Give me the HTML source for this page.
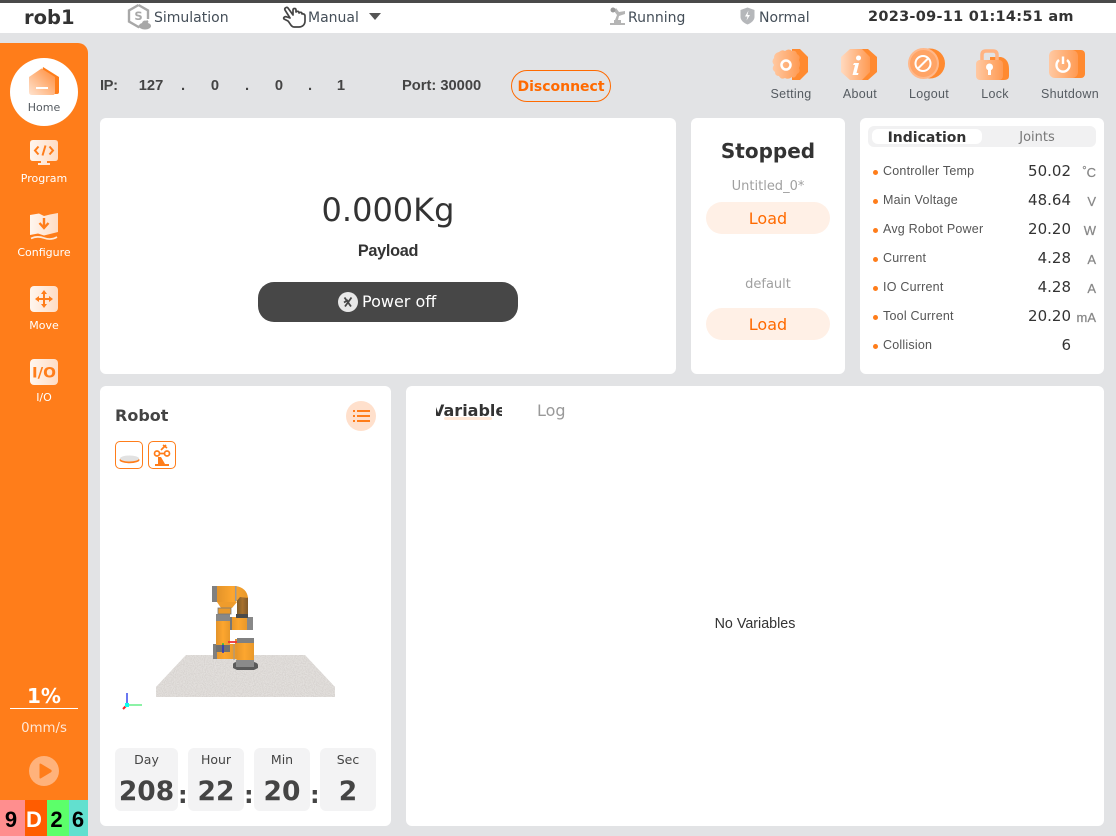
<!DOCTYPE html>
<html><head><meta charset="utf-8"><title>rob1</title>
<style>
*{box-sizing:border-box;margin:0;padding:0}
html,body{width:1116px;height:836px;overflow:hidden;background:#e2e3e5}
body{position:relative;font-family:"DejaVu Sans",sans-serif;color:#333}
.a{position:absolute;white-space:nowrap}
.c{position:absolute;white-space:nowrap;text-align:center}
.card{position:absolute;background:#fff;border-radius:6px}
.lib{font-family:"Liberation Sans",sans-serif}
.nav{position:absolute;left:0;width:88px;text-align:center;color:#fff;font-size:11px}
.tb{font-size:12.5px;color:#555b61;font-family:"Liberation Sans",sans-serif;letter-spacing:.3px}
.r{position:absolute;left:0;width:244px;height:20px}
.dot{position:absolute;left:13px;top:8px;width:5px;height:5px;border-radius:50%;background:#ff7d1a}
.lb{position:absolute;left:23px;top:2px;font:12.5px "Liberation Sans",sans-serif;color:#555;letter-spacing:.22px;white-space:nowrap}
.v{position:absolute;right:33px;top:0;font-size:15px;color:#333;white-space:nowrap}
.u{position:absolute;right:8px;top:3px;font:13px "Liberation Sans",sans-serif;color:#888;white-space:nowrap;-webkit-text-stroke:.25px #888}
.u span{position:relative;top:-3px;font-size:11px}
.load{position:absolute;left:706px;width:124px;height:32px;border-radius:16px;background:#fff0e6;color:#ff6a00;font-size:16px;text-align:center;line-height:33px}
.tm{position:absolute;top:748px;height:63px;background:#f3f3f4;border-radius:6px;text-align:center;color:#444}
.tm i{display:block;font:12.5px/24px "DejaVu Sans",sans-serif;color:#444}
.tm b{display:block;font-size:26.5px;line-height:36px;margin-top:2px;color:#444}
.col{position:absolute;top:781px;font-size:24px;font-weight:bold;color:#444}
.sq{position:absolute;top:800px;height:36px;text-align:center;font:bold 22px/40px "Liberation Sans",sans-serif}
.ip{position:absolute;top:78px;font:bold 14.7px "Liberation Sans",sans-serif;color:#444;white-space:nowrap;text-align:center}
.st{position:absolute;white-space:nowrap;top:9px;font-size:14px;color:#444e58;line-height:18px}
</style></head><body>
<div class="a" style="left:0;top:0;width:1116px;height:33px;background:#fff"></div>
<div class="a" style="left:0;top:0;width:1116px;height:3px;background:#4a4a4a"></div>
<div class="a" style="left:24px;top:7px;font-size:19.5px;font-weight:bold;color:#333;line-height:22px">rob1</div>
<svg class="a" style="left:126px;top:3px" width="26" height="27" viewBox="0 0 26 27"><path d="M12.5 2L22 7.5V16M22 18L12.5 24L3 18.5V7.5L12.5 2" fill="none" stroke="#a8a8a8" stroke-width="2.400"/><text x="12.5" y="17" font-size="11.5" font-weight="bold" fill="#a8a8a8" text-anchor="middle" font-family="DejaVu Sans">S</text><ellipse cx="19" cy="23" rx="6" ry="3.5" fill="#a8a8a8"/><circle cx="19" cy="20.5" r="3" fill="#a8a8a8"/></svg>
<div class="st" style="left:154px">Simulation</div>
<svg class="a" style="left:282px;top:5px" width="24" height="24" viewBox="0 0 24 24"><path d="M6 3l5 7V5c0-2 3-2 3 0v2c1-1 3-1 3 1 1-1 3-1 3 1 1-.5 3 0 3 2v5c0 4-3 6-6 6h-5c-3 0-4-4-6-6l-4-2c-1-1.5 1-3 3-2l3 1L3 5C2 3 5 1.5 6 3z" fill="none" stroke="#444" stroke-width="1.700" stroke-linejoin="round"/></svg>
<div class="st" style="left:308px">Manual</div>
<div class="a" style="left:369px;top:13px;width:0;height:0;border-left:6px solid transparent;border-right:6px solid transparent;border-top:7px solid #555"></div>
<svg class="a" style="left:609px;top:7px" width="17" height="18" viewBox="0 0 17 18"><path d="M1 16h15v2H1zM5 13h7v3H5zM6 13L8 8l-3-4 2-3 3 4 6-1v3l-6 2-1 4z" fill="#b5b5b5"/><circle cx="4" cy="3" r="2.5" fill="#9a9a9a"/></svg>
<div class="st" style="left:628px">Running</div>
<svg class="a" style="left:740px;top:7px" width="15" height="18" viewBox="0 0 15 18"><path d="M7.5 .5L14.5 3V10c0 3-3 6-7 7.5C3.5 16 .5 13 .5 10V3z" fill="#b5b7ba"/><path d="M8.5 3.5L5 9.5h2.5L6.5 13.5 10 8H7.5z" fill="#fff"/></svg>
<div class="st" style="left:759px">Normal</div>
<div class="a" style="left:868px;top:8px;font-size:14.5px;font-weight:bold;color:#333;line-height:18px;letter-spacing:.27px">2023-09-11 01:14:51 am</div>

<div class="a" style="left:0;top:43px;width:88px;height:757px;background:#ff7d1a;border-radius:0 10px 0 0"></div>
<div class="a" style="left:10px;top:58px;width:68px;height:68px;border-radius:50%;background:#fff"></div>
<svg class="a" style="left:28px;top:66px" width="32" height="30" viewBox="0 0 32 30"><defs><linearGradient id="h" x1="0" y1="1" x2="1" y2="0"><stop offset="0" stop-color="#ffe3cf"/><stop offset="1" stop-color="#ff8a36"/></linearGradient><linearGradient id="w" x1="0" y1="0" x2="1" y2="0"><stop offset="0" stop-color="#fff6ef"/><stop offset="1" stop-color="#ffdcc4"/></linearGradient></defs><path d="M15 1L31 11V26Q31 28 29 28H10z" fill="#ff7d1a"/><path d="M13.5 2.5L1 11V26Q1 29 4 29H25Q27 29 27 26V11z" fill="url(#h)"/><rect x="8" y="21" width="12" height="2" fill="#fff"/></svg>
<div class="nav" style="top:101px;color:#555b61;font-size:11px">Home</div>

<svg class="a" style="left:30px;top:140px" width="28" height="25" viewBox="0 0 28 25"><path d="M3 0H25Q28 0 28 3V18Q28 21 25 21H17V23H20V25H8V23H11V21H3Q0 21 0 18V3Q0 0 3 0z" fill="url(#w)"/><path d="M8.5 6.5L5 10.5L8.5 14.5M19.5 6.5L23 10.5L19.5 14.5M15.5 5.5L12.5 15.5" fill="none" stroke="#ff7d1a" stroke-width="2"/></svg>
<div class="nav" style="top:172px">Program</div>
<svg class="a" style="left:30px;top:213px" width="28" height="27" viewBox="0 0 28 27"><path d="M0 2L9 .5 14 3 20 1.5 28 0V19L20 21 14 22.5 8 20.5 0 22z" fill="url(#w)"/><path d="M14 5V14M9.5 10L14 15 18.5 10" fill="none" stroke="#ff7d1a" stroke-width="2.400"/><path d="M1 25.5Q7 22.5 14 25T27 24" fill="none" stroke="#ffead9" stroke-width="1.700"/></svg>
<div class="nav" style="top:246px">Configure</div>
<svg class="a" style="left:30px;top:286px" width="28" height="26" viewBox="0 0 28 26"><rect width="28" height="26" rx="4" fill="url(#w)"/><path d="M14 4L17 8H15V12H19V10L23 13 19 16V14H15V18H17L14 22 11 18H13V14H9V16L5 13 9 10V12H13V8H11z" fill="#ff7d1a"/></svg>
<div class="nav" style="top:319px">Move</div>
<svg class="a" style="left:30px;top:359px" width="28" height="26" viewBox="0 0 28 26"><rect width="28" height="26" rx="4" fill="url(#w)"/><text x="14" y="18.5" text-anchor="middle" font-size="14.5" font-weight="bold" fill="#ff7d1a" font-family="DejaVu Sans" textLength="24" lengthAdjust="spacingAndGlyphs">I/O</text></svg>
<div class="nav" style="top:391px">I/O</div>

<div class="nav" style="top:684px;font-size:20px;font-weight:bold">1%</div>
<div class="a" style="left:10px;top:708px;width:68px;height:1px;background:#fff"></div>
<div class="nav" style="top:721px;font-size:13.3px;color:#ffe7d6">0mm/s</div>
<svg class="a" style="left:29px;top:756px" width="30" height="30" viewBox="0 0 30 30"><circle cx="15" cy="15" r="15" fill="#ffb27b"/><path d="M10.5 8.5Q10.5 7 12 7.8L22 13.8Q23.5 15 22 16.2L12 22.2Q10.5 23 10.5 21.5z" fill="#ff7d1a"/></svg>
<div class="sq" style="left:0;background:#ff8e8e;color:#000;width:25px;padding-right:3px">9</div>
<div class="sq" style="left:25px;width:22px;background:#ff5c00;color:#fff;padding-right:4px">D</div>
<div class="sq" style="left:47px;width:22px;background:#5cff6a;color:#000;padding-right:3px">2</div>
<div class="sq" style="left:69px;width:19px;background:#62e0cf;color:#000;padding-right:1px">6</div>

<div class="ip" style="left:100px;letter-spacing:-.4px">IP:</div>
<div class="ip" style="left:131px;width:40px">127</div>
<div class="ip" style="left:173px;width:20px">.</div>
<div class="ip" style="left:205px;width:20px">0</div>
<div class="ip" style="left:237px;width:20px">.</div>
<div class="ip" style="left:269px;width:20px">0</div>
<div class="ip" style="left:300px;width:20px">.</div>
<div class="ip" style="left:331px;width:20px">1</div>
<div class="ip" style="left:402px">Port: 30000</div>
<div class="c" style="left:511px;top:70px;width:100px;height:32px;border:1px solid #ff6a00;border-radius:16px;color:#ff6a00;font-size:14px;font-weight:bold;line-height:29px;padding-top:2px">Disconnect</div>

<svg class="a" style="left:770px;top:47px" width="40" height="36" viewBox="0 0 40 36"><defs><linearGradient id="g" x1="0" y1="0" x2="1" y2="0"><stop offset="0" stop-color="#ffc9a3"/><stop offset="1" stop-color="#ff9a52"/></linearGradient></defs><path d="M22 2H30L38 10V25L30 33H22z" fill="#ff8a30"/><path d="M9 5Q12 2 15 4Q19 1 22 4Q26 3 27 7Q31 9 29 13Q31 17 29 21Q31 25 27 27Q25 32 22 30Q18 33 15 31Q11 33 9 29Q5 29 5 25Q1 22 4 18Q1 14 4 11Q4 6 9 5z" fill="url(#g)"/><circle cx="16" cy="18" r="4.5" fill="none" stroke="#fff" stroke-width="2.500"/></svg>
<svg class="a" style="left:840px;top:47px" width="38" height="36" viewBox="0 0 38 36"><defs><linearGradient id="g2" x1="0" y1="0" x2="1" y2="0"><stop offset="0" stop-color="#ffd9bf"/><stop offset="1" stop-color="#ff9a52"/></linearGradient></defs><path d="M20 2H28L37 10V25L28 33H20z" fill="#ff8a30"/><path d="M10 2H22L30 10V25L22 33H10L1 25V10z" fill="url(#g2)"/><path d="M14 16h5l-2.5 10h2l-.5 2h-5.5l2.5-10h-2z" fill="#fff"/><circle cx="18.5" cy="11" r="2.500" fill="#fff"/></svg>
<svg class="a" style="left:908px;top:48px" width="38" height="32" viewBox="0 0 38 32"><circle cx="22" cy="15.5" r="15" fill="#ff8a30"/><circle cx="15.5" cy="15.5" r="15.5" fill="#ffb88a"/><circle cx="15.5" cy="15.5" r="13.5" fill="#ffa466"/><circle cx="15" cy="15.5" r="7.5" fill="none" stroke="#fff" stroke-width="2"/><path d="M10 20.5L20 10.5" stroke="#fff" stroke-width="2"/></svg>
<svg class="a" style="left:976px;top:49px" width="34" height="32" viewBox="0 0 34 32"><path d="M14 8H25Q33 10 33 20V27Q33 31 28 31H14z" fill="#ff8a30"/><path d="M6 12V6Q6 2 10 2H17Q21 2 21 6V12" fill="none" stroke="#ffb382" stroke-width="3.500"/><rect x="0" y="11" width="27" height="20" rx="4" fill="url(#g)"/><circle cx="13.5" cy="18" r="3.500" fill="#fff"/><rect x="12" y="19" width="3" height="7" fill="#fff"/></svg>
<svg class="a" style="left:1049px;top:49px" width="38" height="30" viewBox="0 0 38 30"><rect x="14" y="1" width="22" height="28" rx="4" fill="#ff8a30"/><rect x="0" y="1" width="29" height="28" rx="6" fill="url(#g)"/><path d="M10 11a6.5 6.5 0 1 0 8 0" fill="none" stroke="#fff" stroke-width="2.400"/><path d="M14 7.5V15" stroke="#fff" stroke-width="2.400"/></svg>
<div class="c tb" style="left:741px;top:87px;width:100px">Setting</div>
<div class="c tb" style="left:810px;top:87px;width:100px">About</div>
<div class="c tb" style="left:879px;top:87px;width:100px">Logout</div>
<div class="c tb" style="left:945px;top:87px;width:100px">Lock</div>
<div class="c tb" style="left:1020px;top:87px;width:100px">Shutdown</div>

<div class="card" style="left:100px;top:118px;width:576px;height:256px"></div>
<div class="c" style="left:258px;top:190px;width:260px;font-size:32px;line-height:40px;color:#333">0.000Kg</div>
<div class="c lib" style="left:258px;top:242px;width:260px;font-size:16.3px;font-weight:bold;color:#333;letter-spacing:-.3px">Payload</div>
<div class="a" style="left:258px;top:282px;width:260px;height:40px;border-radius:16px;background:#474747"></div>
<svg class="a" style="left:338px;top:292px" width="20" height="20" viewBox="0 0 20 20"><circle cx="10" cy="10" r="10" fill="#e8e8e8"/><path d="M6.5 5.5L13 14.5M13.5 5.5L7 14.5M10 8L6 10.5" stroke="#474747" stroke-width="1.800" fill="none"/></svg>
<div class="a" style="left:362px;top:293px;font-size:16px;color:#fff;line-height:18px">Power off</div>

<div class="card" style="left:691px;top:118px;width:154px;height:256px"></div>
<div class="c" style="left:691px;top:138px;width:154px;font-size:20px;font-weight:bold;color:#333;line-height:26px">Stopped</div>
<div class="c" style="left:691px;top:178px;width:154px;font-size:13px;color:#a0a0a0;line-height:17px">Untitled_0*</div>
<div class="load" style="top:202px">Load</div>
<div class="c" style="left:691px;top:276px;width:154px;font-size:13px;color:#a0a0a0;line-height:17px">default</div>
<div class="load" style="top:308px">Load</div>

<div class="card" style="left:860px;top:118px;width:244px;height:256px"></div>
<div class="a" style="left:868px;top:126px;width:228px;height:21px;background:#f1f1f2;border-radius:6px"></div>
<div class="a" style="left:872px;top:129px;width:110px;height:15px;background:#fff;border-radius:6px"></div>
<div class="c" style="left:872px;top:129px;width:110px;font-size:14px;font-weight:bold;color:#333;line-height:18px">Indication</div>
<div class="c" style="left:982px;top:129px;width:110px;font-size:13px;color:#777;line-height:18px">Joints</div>
<div class="a" style="left:860px;top:162px;width:244px;height:200px">
<div class="r" style="top:0"><span class="dot"></span><span class="lb">Controller Temp</span><span class="v">50.02</span><span class="u"><span>°</span>C</span></div>
<div class="r" style="top:29px"><span class="dot"></span><span class="lb">Main Voltage</span><span class="v">48.64</span><span class="u">V</span></div>
<div class="r" style="top:58px"><span class="dot"></span><span class="lb">Avg Robot Power</span><span class="v">20.20</span><span class="u">W</span></div>
<div class="r" style="top:87px"><span class="dot"></span><span class="lb">Current</span><span class="v">4.28</span><span class="u">A</span></div>
<div class="r" style="top:116px"><span class="dot"></span><span class="lb">IO Current</span><span class="v">4.28</span><span class="u">A</span></div>
<div class="r" style="top:145px"><span class="dot"></span><span class="lb">Tool Current</span><span class="v">20.20</span><span class="u">mA</span></div>
<div class="r" style="top:174px"><span class="dot"></span><span class="lb">Collision</span><span class="v">6</span></div>
</div>

<div class="card" style="left:100px;top:386px;width:291px;height:440px"></div>
<div class="a" style="left:115px;top:406px;font-size:16px;font-weight:bold;color:#444;line-height:20px">Robot</div>
<div class="a" style="left:346px;top:401px;width:30px;height:30px;border-radius:50%;background:#ffe0cc"></div>
<svg class="a" style="left:353px;top:410px" width="17" height="12" viewBox="0 0 17 12"><path d="M0 1h2M4 1h13M0 6h2M4 6h13M0 11h2M4 11h13" stroke="#ff7d1a" stroke-width="2"/></svg>
<div class="a" style="left:115px;top:441px;width:28px;height:28px;border:1px solid #ff7d1a;border-radius:5px"></div>
<div class="a" style="left:148px;top:441px;width:28px;height:28px;border:1px solid #ff7d1a;border-radius:5px"></div>
<svg class="a" style="left:115px;top:441px" width="61" height="28" viewBox="0 0 61 28"><ellipse cx="14.5" cy="19" rx="10" ry="3.200" fill="#ff7d1a"/><ellipse cx="14.5" cy="17.5" rx="9.5" ry="3" fill="#e2e2e2"/><g fill="none" stroke="#ff7d1a" stroke-width="1.700"><circle cx="42" cy="12.5" r="2.500"/><circle cx="52" cy="12.5" r="2.500"/><path d="M45 12.5H49M46 9L51 4M48 4L52 7"/></g><path d="M40 23H54V25H40zM43 16H46L50 23H43z" fill="#ff7d1a"/></svg>

<svg class="a" style="left:0;top:0" width="1116" height="836" viewBox="0 0 1116 836">
<defs>
<filter id="n" x="0" y="0" width="100%" height="100%"><feTurbulence type="fractalNoise" baseFrequency="0.9" numOctaves="2" seed="3" result="t"/><feColorMatrix in="t" type="matrix" values="0 0 0 0 .68  0 0 0 0 .65  0 0 0 0 .63  3.5 0 0 0 -1.35" result="s"/><feComposite in="s" in2="SourceGraphic" operator="in" result="c"/><feMerge><feMergeNode in="SourceGraphic"/><feMergeNode in="c"/></feMerge></filter>
<linearGradient id="o" x1="0" y1="0" x2="1" y2="0"><stop offset="0" stop-color="#e2932a"/><stop offset=".5" stop-color="#fda62f"/><stop offset="1" stop-color="#e8982a"/></linearGradient>
<linearGradient id="b" x1="0" y1="0" x2="1" y2="0"><stop offset="0" stop-color="#7d5a2a"/><stop offset=".5" stop-color="#a8712c"/><stop offset="1" stop-color="#80592a"/></linearGradient>
</defs>
<path d="M186 655H305L335 687V697H156V687z" fill="#e2dfdc" filter="url(#n)"/>
<path d="M233 664Q234 662 237 662H254Q258 663 258 665V668L254 670H237L233 668z" fill="#5a5a5a"/>
<rect x="236" y="660" width="18" height="7" fill="#8a8a8a"/>
<path d="M235 639H254V660H237L235 658z" fill="url(#o)"/>
<path d="M213 644L236 644 236 659 213 659z" fill="url(#o)"/>
<rect x="213" y="644" width="4" height="15" fill="#7f7f7f"/>
<rect x="237" y="638" width="17" height="5" fill="#808080"/>
<path d="M234 644V660" stroke="#999" stroke-width="1"/>
<rect x="216" y="614" width="14" height="38" fill="url(#o)"/>
<rect x="216" y="614" width="14" height="7" fill="#888"/>
<rect x="216" y="645" width="14" height="7" fill="#707070"/>
<path d="M230 617H247V630H230z" fill="url(#o)"/>
<rect x="247" y="617" width="6" height="13" fill="#888"/>
<rect x="230" y="617" width="2" height="13" fill="#777"/>
<path d="M237 597H248V615H237z" fill="url(#b)"/>
<rect x="236" y="614" width="12" height="4" fill="#4a4a4a"/>
<path d="M217 586H236Q247 588 248 598L240 597 236 602H217z" fill="url(#o)"/>
<path d="M217 602H237L232 608H221z" fill="#ef9c2c"/>
<rect x="218" y="608" width="13" height="6" fill="#e9992b" stroke="#777" stroke-width=".8"/>
<rect x="212" y="586" width="5" height="16" fill="#808080"/>
<rect x="235" y="586" width="1.5" height="15" fill="#999"/>
<path d="M228 642H237" stroke="#e33" stroke-width="1.800"/>
<path d="M223 644V653" stroke="#2536c8" stroke-width="1.500"/>
<circle cx="223" cy="644" r="1" fill="#3c3"/>
<path d="M127 705V693" stroke="#6a78f0" stroke-width="2"/>
<path d="M127 705H142" stroke="#66ee88" stroke-width="1.500"/>
<path d="M127 705L123 709" stroke="#f22" stroke-width="2"/>
<rect x="125" y="703" width="4" height="4" fill="#1fe"/>
</svg>

<div class="tm" style="left:115px;width:63px"><i>Day</i><b>208</b></div>
<div class="tm" style="left:188px;width:56px"><i>Hour</i><b>22</b></div>
<div class="tm" style="left:254px;width:56px"><i>Min</i><b>20</b></div>
<div class="tm" style="left:320px;width:56px"><i>Sec</i><b>2</b></div>
<div class="col" style="left:178px">:</div>
<div class="col" style="left:244px">:</div>
<div class="col" style="left:310px">:</div>

<div class="card" style="left:406px;top:386px;width:698px;height:440px"></div>
<div class="a" style="left:444px;top:417px;width:48px;height:3px;background:#ffe7d6;border-radius:2px"></div>
<div class="a" style="left:436px;top:400px;width:66px;height:20px;overflow:hidden"><span class="a" style="left:-4px;top:2px;font-size:16px;font-weight:bold;color:#333;line-height:18px">Variable</span></div>
<div class="a" style="left:537px;top:402px;font-size:16px;color:#999;line-height:18px">Log</div>
<div class="c lib" style="left:406px;top:615px;width:698px;font-size:14.3px;color:#333;line-height:18px">No Variables</div>
</body></html>
